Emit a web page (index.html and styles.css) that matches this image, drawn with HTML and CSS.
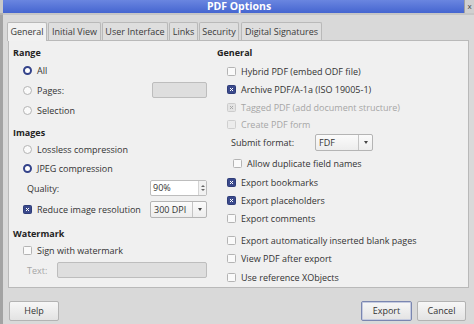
FILE: index.html
```html
<!DOCTYPE html>
<html>
<head>
<meta charset="utf-8">
<link rel="stylesheet" href="styles.css">
</head>
<body>
<div class="window">
  <div class="titlebar">
    <div class="tb-left"></div>
    <div class="tb-title">PDF Options</div>
    <div class="tb-close">x</div>
  </div>
  <div class="tb-sep"></div>
  <div class="body">
    <div class="tabs">
      <div class="tab active t-general">General</div>
      <div class="tab t-initial">Initial View</div>
      <div class="tab t-ui">User Interface</div>
      <div class="tab t-links">Links</div>
      <div class="tab t-security">Security</div>
      <div class="tab t-digital">Digital Signatures</div>
    </div>
    <div class="panel">
      <div class="col col-left">
        <div class="head">Range</div>
        <div class="row r20"><span class="radio on"></span><span class="lbl">All</span></div>
        <div class="row r20"><span class="radio"></span><span class="lbl">Pages:</span><span class="field disabled w-short"></span></div>
        <div class="row r20"><span class="radio"></span><span class="lbl">Selection</span></div>

        <div class="head mt6">Images</div>
        <div class="row r18"><span class="radio"></span><span class="lbl">Lossless compression</span></div>
        <div class="row r20"><span class="radio on"></span><span class="lbl">JPEG compression</span></div>
        <div class="row r20"><span class="plain">Quality:</span>
          <span class="spin"><span class="spin-val">90%</span><span class="spin-btns"><span class="up"></span><span class="down"></span></span></span>
        </div>
        <div class="row r22"><span class="check on"></span><span class="lbl">Reduce image resolution</span>
          <span class="combo c-left"><span class="combo-val">300 DPI</span><span class="combo-btn"><span class="tri"></span></span></span>
        </div>

        <div class="head mt7">Watermark</div>
        <div class="row r18"><span class="check"></span><span class="lbl">Sign with watermark</span></div>
        <div class="row r22"><span class="plain dim">Text:</span><span class="field disabled w-long"></span></div>
      </div>

      <div class="col col-right">
        <div class="head">General</div>
        <div class="row r18 mt2"><span class="check"></span><span class="lbl">Hybrid PDF (embed ODF file)</span></div>
        <div class="row r18"><span class="check on"></span><span class="lbl">Archive PDF/A-1a (ISO 19005-1)</span></div>
        <div class="row r18"><span class="check dis-on"></span><span class="lbl dim">Tagged PDF (add document structure)</span></div>
        <div class="row r16"><span class="check dis"></span><span class="lbl dim">Create PDF form</span></div>
        <div class="row r20"><span class="plain sub">Submit format:</span>
          <span class="combo c-right"><span class="combo-val">FDF</span><span class="combo-btn"><span class="tri"></span></span></span>
        </div>
        <div class="row r20 mt1 indent"><span class="check"></span><span class="lbl">Allow duplicate field names</span></div>
        <div class="row r18"><span class="check on"></span><span class="lbl">Export bookmarks</span></div>
        <div class="row r18"><span class="check on"></span><span class="lbl">Export placeholders</span></div>
        <div class="row r18"><span class="check"></span><span class="lbl">Export comments</span></div>
        <div class="row r18 mt4"><span class="check"></span><span class="lbl">Export automatically inserted blank pages</span></div>
        <div class="row r18"><span class="check"></span><span class="lbl">View PDF after export</span></div>
        <div class="row r18 mt1"><span class="check"></span><span class="lbl">Use reference XObjects</span></div>
      </div>
    </div>
    <div class="buttons">
      <div class="btn b-help">Help</div>
      <div class="spacer"></div>
      <div class="btn b-export focus">Export</div>
      <div class="btn b-cancel">Cancel</div>
    </div>
  </div>
</div>
</body>
</html>
```

FILE: styles.css
```css
* { box-sizing: border-box; }
html, body { margin: 0; padding: 0; }
body {
  width: 474px;
  height: 324px;
  overflow: hidden;
  background: #d9d9d9;
  font-family: "Open Sans", "Noto Sans", sans-serif;
  font-size: 9px;
  color: #333;
}
.window { width: 474px; height: 324px; display: flex; flex-direction: column; }

.titlebar { height: 13px; display: flex; background: linear-gradient(#6a86e0, #4565d0); }
.tb-left { width: 3px; background: #c9c9c9; }
.tb-title {
  flex: 1;
  color: #fff;
  font-weight: bold;
  font-size: 10.5px;
  line-height: 13px;
  text-align: center;
  padding-left: 12px;
}
.tb-close {
  width: 10px;
  margin-left: 1px;
  background: #d0d0d0;
  border-left: 1px solid #a0a0a0;
  color: #444;
  font-size: 8px;
  line-height: 11px;
  text-align: center;
}
.tb-sep { height: 2px; background: #c6c6c6; border-left: 3px solid #b0b0b0; }

.body {
  flex: 1;
  border-left: 3px solid #a3a3a3;
  padding: 7px 5px 0 4px;
  display: flex;
  flex-direction: column;
}

.tabs { display: flex; height: 18px; gap: 1px; }
.tab {
  height: 18px;
  border: 1px solid #b9b9b9;
  border-bottom: none;
  border-radius: 2px 2px 0 0;
  background: #dedede;
  text-align: center;
  line-height: 17px;
  color: #3a3a3a;
  white-space: nowrap;
}
.tab.active { background: #f1f1f1; height: 19px; margin-bottom: -1px; position: relative; z-index: 1; }
.t-general { width: 40px; }
.t-initial { width: 53px; }
.t-ui { width: 66px; }
.t-links { width: 29px; }
.t-security { width: 40px; }
.t-digital { width: 81px; margin-left: 1px; }

.panel {
  margin-left: 1px;
  width: 461px;
  height: 248px;
  border: 1px solid #b9b9b9;
  background: #f0f0f0;
  display: flex;
  padding-left: 4px;
}
.col { display: flex; flex-direction: column; padding-top: 5px; }
.col-left { width: 204px; padding-right: 10px; }
.col-right { flex: 1; }

.head { height: 14px; line-height: 14px; font-weight: bold; color: #222; }
.mt1 { margin-top: 1px; }
.mt2 { margin-top: 2px; }
.mt4 { margin-top: 4px; }
.mt6 { margin-top: 6px; }
.mt7 { margin-top: 7px; }

.row { display: flex; align-items: center; white-space: nowrap; }
.r16 { height: 16px; }
.r18 { height: 18px; }
.r20 { height: 20px; }
.r22 { height: 22px; }

.col-left .row { padding-left: 10px; }
.col-right .row { padding-left: 10px; }
.col-right .row.indent { padding-left: 16px; }

.lbl { margin-left: 5px; }
.dim { color: #a6a6a6; }
.plain { margin-left: 4px; }
.sub { margin-left: 4px; width: 84px; }

.radio {
  width: 9px; height: 9px;
  border-radius: 50%;
  border: 1px solid #b4b4b4;
  background: #fafafa;
  flex: none;
}
.radio.on { border: 2.5px solid #34438a; background: #fff; }

.check {
  width: 9px; height: 9px;
  border: 1px solid #b4b4b4;
  border-radius: 1.5px;
  background: #fafafa;
  flex: none;
  position: relative;
}
.check.on { background: #3b4a8c; border-color: #2e3c78; }
.check.on::after, .check.dis-on::after {
  content: "";
  position: absolute;
  left: 2px; top: 2px;
  width: 3px; height: 3px;
  background:
    linear-gradient(45deg, transparent 35%, #fff 35%, #fff 65%, transparent 65%),
    linear-gradient(-45deg, transparent 35%, #fff 35%, #fff 65%, transparent 65%);
}
.check.dis { background: #ececec; border-color: #cfcfcf; }
.check.dis-on { background: #e4e4e4; border-color: #cccccc; }
.check.dis-on::after {
  background:
    linear-gradient(45deg, transparent 35%, #a8a8a8 35%, #a8a8a8 65%, transparent 65%),
    linear-gradient(-45deg, transparent 35%, #a8a8a8 35%, #a8a8a8 65%, transparent 65%);
}

.field {
  height: 16px;
  border: 1px solid #bdbdbd;
  border-radius: 2px;
  background: #fff;
  margin-left: auto;
}
.field.disabled { background: #dedede; }
.w-short { width: 55px; }
.w-long { width: 150px; }

.spin {
  margin-left: auto;
  width: 57px; height: 16px;
  display: flex;
  border: 1px solid #bdbdbd;
  border-radius: 2px;
  background: #fff;
}
.spin-val { flex: 1; padding-left: 2px; line-height: 14px; }
.spin-btns {
  width: 8px;
  border-left: 1px solid #d4d4d4;
  background: #f2f2f2;
  display: flex; flex-direction: column; align-items: center; justify-content: center; gap: 2px;
}
.up { width: 0; height: 0; border-left: 2px solid transparent; border-right: 2px solid transparent; border-bottom: 2px solid #666; }
.down { width: 0; height: 0; border-left: 2px solid transparent; border-right: 2px solid transparent; border-top: 2px solid #666; }

.combo {
  height: 17px;
  display: flex;
  border: 1px solid #b4b4b4;
  border-radius: 2px;
  background: linear-gradient(#fbfbfb, #ededed);
}
.c-left { margin-left: auto; width: 57px; }
.c-right { width: 58px; }
.combo-val { flex: 1; padding-left: 3px; line-height: 15px; color: #333; }
.combo-btn {
  width: 14px;
  border-left: 1px solid #c4c4c4;
  display: flex; align-items: center; justify-content: center;
}
.tri { width: 0; height: 0; border-left: 2.5px solid transparent; border-right: 2.5px solid transparent; border-top: 3px solid #444; }

.buttons { display: flex; align-items: flex-start; padding-top: 13px; padding-right: 3px; }
.spacer { flex: 1; }
.btn {
  height: 20px;
  border: 1px solid #b3b3b3;
  border-radius: 2px;
  background: linear-gradient(#f7f7f7, #e3e3e3);
  text-align: center;
  line-height: 18px;
  color: #333;
}
.b-help { width: 50px; margin-left: 2px; }
.b-export { width: 51px; }
.b-cancel { width: 49px; margin-left: 5px; }
.btn.focus { border-color: #7a86b0; box-shadow: inset 0 0 0 1px #c5cbe0; }
```
